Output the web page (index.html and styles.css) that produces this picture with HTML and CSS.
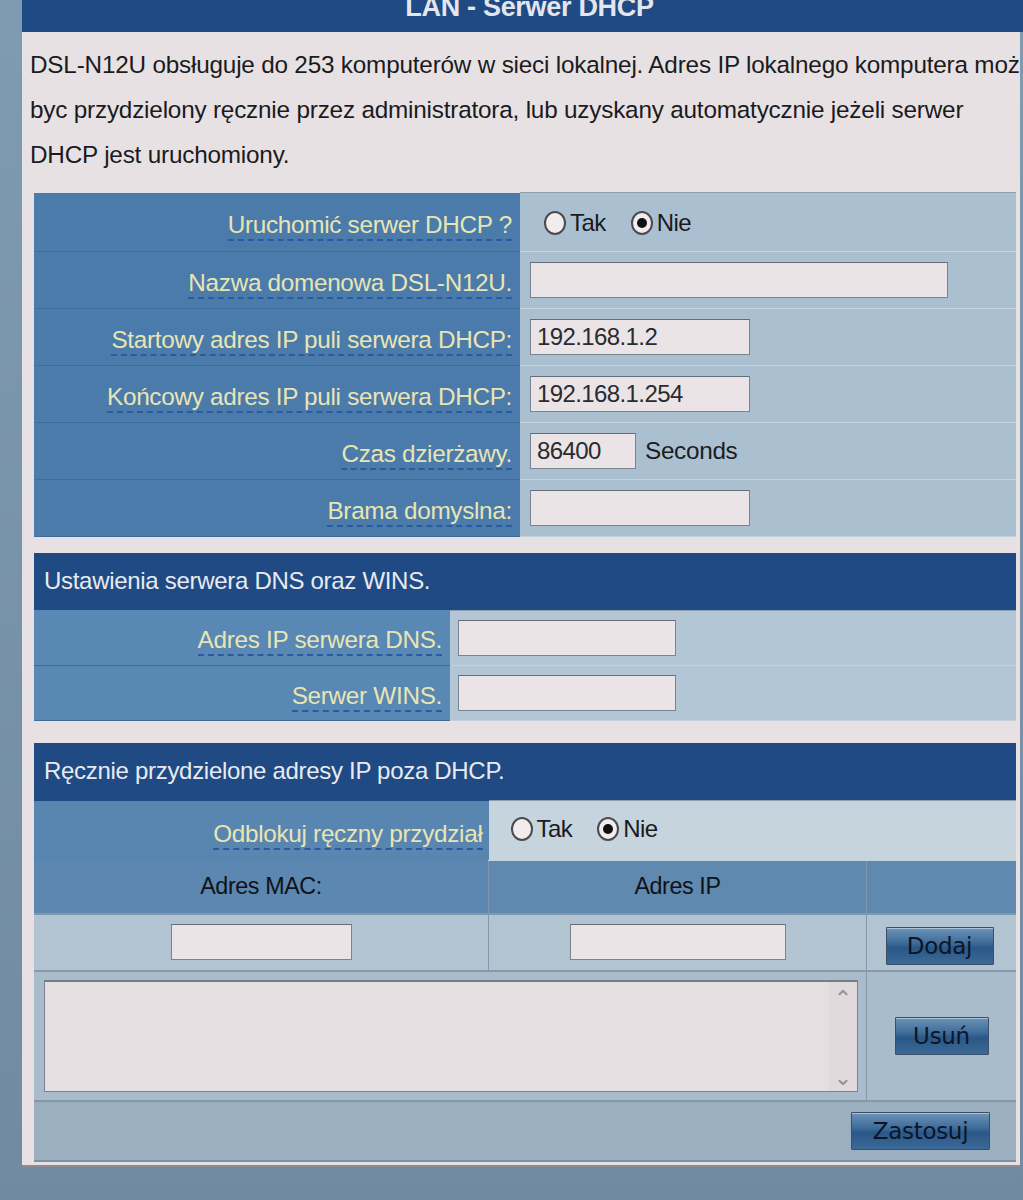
FILE: index.html
```html
<!DOCTYPE html>
<html lang="pl">
<head>
<meta charset="utf-8">
<title>LAN - Serwer DHCP</title>
<link rel="stylesheet" href="styles.css">
</head>
<body>
<div class="screen">
  <div class="title"><span>LAN - Serwer DHCP</span></div>
  <div class="panel">
    <p class="desc">DSL-N12U obsługuje do 253 komputerów w sieci lokalnej. Adres IP lokalnego komputera może<br>byc przydzielony ręcznie przez administratora, lub uzyskany automatycznie jeżeli serwer<br>DHCP jest uruchomiony.</p>

    <table class="form t1">
      <tr>
        <th><span class="lbl">Uruchomić serwer DHCP ?</span></th>
        <td>
          <label class="radio"><span class="dot"></span>Tak</label>
          <label class="radio"><span class="dot on"></span>Nie</label>
        </td>
      </tr>
      <tr>
        <th><span class="lbl">Nazwa domenowa DSL-N12U.</span></th>
        <td><span class="inp w-long"></span></td>
      </tr>
      <tr>
        <th><span class="lbl">Startowy adres IP puli serwera DHCP:</span></th>
        <td><span class="inp w-ip">192.168.1.2</span></td>
      </tr>
      <tr>
        <th><span class="lbl">Końcowy adres IP puli serwera DHCP:</span></th>
        <td><span class="inp w-ip">192.168.1.254</span></td>
      </tr>
      <tr>
        <th><span class="lbl">Czas dzierżawy.</span></th>
        <td><span class="inp w-short">86400</span><span class="unit">Seconds</span></td>
      </tr>
      <tr>
        <th><span class="lbl">Brama domyslna:</span></th>
        <td><span class="inp w-ip"></span></td>
      </tr>
    </table>

    <table class="form t2">
      <tr><td class="head" colspan="2">Ustawienia serwera DNS oraz WINS.</td></tr>
      <tr>
        <th><span class="lbl">Adres IP serwera DNS.</span></th>
        <td><span class="inp w-ip2"></span></td>
      </tr>
      <tr>
        <th><span class="lbl">Serwer WINS.</span></th>
        <td><span class="inp w-ip2"></span></td>
      </tr>
    </table>

    <table class="form t3">
      <tr><td class="head" colspan="3">Ręcznie przydzielone adresy IP poza DHCP.</td></tr>
      <tr class="r-enable">
        <th><span class="lbl">Odblokuj ręczny przydział</span></th>
        <td colspan="2">
          <label class="radio"><span class="dot"></span>Tak</label>
          <label class="radio"><span class="dot on"></span>Nie</label>
        </td>
      </tr>
      <tr class="r-cols">
        <td class="c1">Adres MAC:</td>
        <td class="c2">Adres IP</td>
        <td class="c3"></td>
      </tr>
      <tr class="r-inputs">
        <td class="c1"><span class="inp w-mac"></span></td>
        <td class="c2"><span class="inp w-ip3"></span></td>
        <td class="c3"><span class="btn b-add">Dodaj</span></td>
      </tr>
      <tr class="r-list">
        <td colspan="2" class="c12">
          <div class="listbox">
            <div class="scroll"><span class="arr">&#8963;</span><span class="arr">&#8964;</span></div>
          </div>
        </td>
        <td class="c3"><span class="btn b-del">Usuń</span></td>
      </tr>
      <tr class="r-apply">
        <td colspan="3"><span class="btn b-apply">Zastosuj</span></td>
      </tr>
    </table>
  </div>
</div>
</body>
</html>
```

FILE: styles.css
```css
html, body {
  margin: 0;
  padding: 0;
  background: #7690a8;
  overflow: hidden;
}

.screen {
  width: 1023px;
  height: 1200px;
  position: relative;
  overflow: hidden;
  background: linear-gradient(#7f9bb2, #6f8aa2);
  font-family: "Liberation Sans", Arial, sans-serif;
}

.title {
  margin-left: 22px;
  height: 32px;
  background: #1f4a84;
  display: flex;
  justify-content: center;
  align-items: flex-end;
  overflow: hidden;
}

.title span {
  color: #e4e6ee;
  font-weight: bold;
  font-size: 27px;
  line-height: 27px;
  margin-bottom: 11px;
  margin-left: 14px;
  letter-spacing: -0.3px;
}

.panel {
  margin-left: 22px;
  width: 998px;
  height: 1135px;
  background: #e7e1e3;
  border-bottom: 2px solid #8d8a93;
  box-sizing: border-box;
  padding: 10px 0 0 12px;
  overflow: hidden;
}

.desc {
  margin: 0 0 15px -4px;
  font-size: 24.3px;
  line-height: 45px;
  color: #1b1b1e;
  white-space: nowrap;
  letter-spacing: -0.2px;
}

.form {
  width: 982px;
  border-collapse: collapse;
  font-size: 24.3px;
}

.form th {
  text-align: right;
  font-weight: normal;
  padding: 6px 8px 0 0;
  background: #4b7bab;
  border-bottom: 1px solid #3f6c98;
}

.form td {
  padding: 0 0 0 10px;
  background: #aac0d0;
  border-top: 1px solid #8c9dac;
  border-bottom: 1px solid #c4d2dc;
  white-space: nowrap;
}

.lbl {
  color: #e9e5b3;
  border-bottom: 2px dashed #2a5aa0;
  padding-bottom: 1px;
  white-space: nowrap;
  letter-spacing: -0.3px;
}

.t1 th { width: 478px; }
.t1 tr { height: 57px; }
.t1 tr:first-child { height: 59px; }
.t1 tr:first-child td { padding-top: 6px; }

.inp {
  display: inline-block;
  vertical-align: middle;
  box-sizing: border-box;
  height: 36px;
  line-height: 34px;
  padding: 0 6px;
  background: #ebe4e6;
  border: 1px solid #7b838e;
  border-top-color: #646c78;
  color: #2a2a30;
  font-size: 24px;
  letter-spacing: -0.6px;
}

.w-long { width: 418px; }
.w-ip { width: 220px; }
.w-short { width: 106px; }
.w-ip2 { width: 218px; }
.w-mac { width: 181px; }
.w-ip3 { width: 216px; }

.unit {
  margin-left: 9px;
  color: #1c1c22;
  vertical-align: middle;
  font-size: 24.3px;
  letter-spacing: -0.3px;
}

.radio {
  display: inline-flex;
  align-items: center;
  color: #1a1a22;
  font-size: 24px;
  margin-right: 4px;
  letter-spacing: -0.5px;
}

.dot {
  width: 22px;
  height: 24px;
  border-radius: 50%;
  border: 2px solid #4a4a52;
  background: #f2ecec;
  box-sizing: border-box;
  margin: 0 4px 0 14px;
  position: relative;
}

.dot.on::after {
  content: "";
  position: absolute;
  left: 4px;
  top: 5px;
  width: 10px;
  height: 10px;
  border-radius: 50%;
  background: #111;
}

.form td.head {
  background: #1f4a84;
  color: #e8eaf0;
  padding-left: 10px;
  border: none;
  font-size: 24px;
  letter-spacing: -0.3px;
}

.t2 { margin-top: 16px; }
.t2 th { width: 408px; background: #5888b3; }
.t2 td { background: #b2c6d5; padding-left: 8px; }
.t2 tr { height: 55px; }
.t2 tr:first-child { height: 57px; }

.t3 { margin-top: 22px; }
.t3 tr:first-child { height: 58px; }

.t3 .r-enable { height: 60px; }
.t3 .r-enable th { width: 448px; background: #5886b0; padding-right: 6px; border-bottom: none; }
.t3 .r-enable td { background: #c6d4de; padding-left: 8px; }

.t3 .r-cols { height: 53px; }
.t3 .r-cols td {
  background: #5b87b0;
  color: #101218;
  text-align: center;
  padding: 0;
  border-top: none;
  border-bottom: 2px solid #7f97ad;
  font-size: 23.3px;
  letter-spacing: -0.4px;
}
.t3 .r-cols td.c2, .t3 .r-cols td.c3 { background: #5f89af; }

.t3 td.c1 { width: 454px; }
.t3 td.c2 { width: 377px; border-left: 1px solid #8297aa; }
.t3 td.c3 { border-left: 1px solid #8297aa; }

.t3 .r-inputs { height: 57px; }
.t3 .r-inputs td {
  background: #b2c4d2;
  text-align: center;
  padding: 0;
  border-top: none;
  border-bottom: 2px solid #8799aa;
}
.t3 .r-inputs td.c3 { padding-top: 8px; padding-right: 4px; }

.t3 .r-list { height: 130px; }
.t3 .r-list td {
  background: #a9bccb;
  padding: 0;
  border-top: none;
  border-bottom: 2px solid #8697a8;
}
.t3 .r-list td.c3 { text-align: center; }
.t3 .r-list td.c12 { padding: 0 8px 0 10px; }

.listbox {
  height: 112px;
  box-sizing: border-box;
  background: #e6dfe1;
  border: 1px solid #7a828c;
  border-top: 2px solid #777d86;
  display: flex;
  justify-content: flex-end;
}

.scroll {
  width: 28px;
  display: flex;
  flex-direction: column;
  justify-content: space-between;
  align-items: center;
  padding: 6px 0 2px;
  background: #e1dadc;
}

.arr {
  color: #8e8e96;
  font-size: 22px;
  line-height: 22px;
  font-family: "DejaVu Sans", sans-serif;
}

.t3 .r-apply { height: 60px; }
.t3 .r-apply td {
  background: #9bafc1;
  text-align: right;
  padding: 0 26px 0 0;
  border-top: none;
  border-bottom: 2px solid #7f8fa0;
}

.btn {
  display: inline-block;
  vertical-align: middle;
  box-sizing: border-box;
  height: 38px;
  line-height: 36px;
  text-align: center;
  color: #0c1528;
  font-family: "DejaVu Sans", Verdana, sans-serif;
  font-size: 23px;
  letter-spacing: -0.3px;
  background: linear-gradient(#6d93b8 0%, #3a6896 45%, #2a5786 55%, #3c6a98 100%);
  border: 1px solid #3c4f66;
  box-shadow: inset 0 1px 0 #a9c2da;
  border-radius: 1px;
}

.b-add { width: 108px; }
.b-del { width: 94px; }
.b-apply { width: 139px; }
```
